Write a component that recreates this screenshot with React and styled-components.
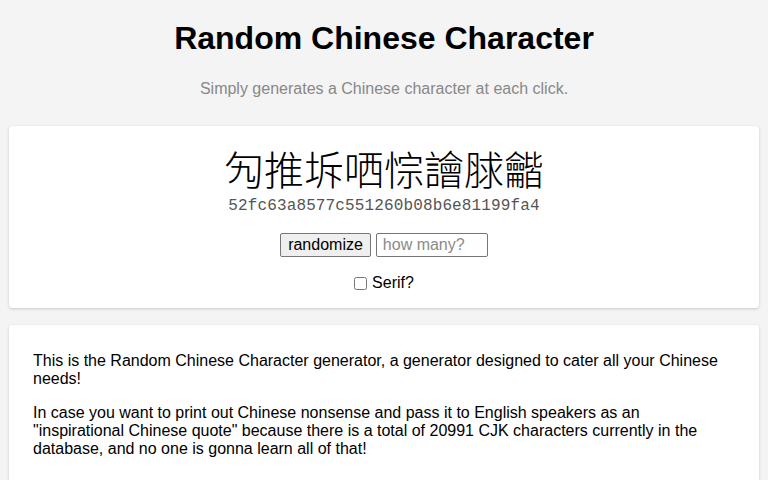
import React, { useState } from "react";
import styled, { createGlobalStyle } from "styled-components";

const GlobalStyle = createGlobalStyle`
  html, body {
    margin: 0;
    padding: 0;
    background-color: #f4f4f4;
    font-family: "Liberation Sans", Arial, sans-serif;
    color: #000;
  }
`;

const Page = styled.div`
  display: flex;
  flex-direction: column;
  padding: 0 9px;
  gap: 17px;
`;

const Header = styled.header`
  display: flex;
  flex-direction: column;
  align-items: center;
  padding-top: 20px;
  padding-bottom: 11px;
  h1 {
    margin: 0;
    font-size: 32px;
    line-height: 37px;
    font-weight: bold;
  }
  p {
    margin: 23px 0 0;
    font-size: 16px;
    line-height: 18px;
    color: #888;
  }
`;

const Card = styled.section`
  background-color: #fff;
  border-radius: 3px;
  box-shadow: 0 1px 3px rgba(0, 0, 0, 0.18);
  padding: ${(p) => p.$pad};
`;

const Generator = styled(Card)`
  display: flex;
  flex-direction: column;
  align-items: center;
`;

const Chars = styled.div`
  font-family: ${(p) =>
    p.$serif
      ? '"Noto Serif CJK SC", "Liberation Serif", serif'
      : '"Noto Sans CJK SC", sans-serif'};
  font-size: 40px;
  line-height: 48px;
  font-weight: 300;
`;

const Hash = styled.div`
  margin-top: 5px;
  font-family: "Liberation Mono", monospace;
  font-size: 16px;
  line-height: 18px;
  letter-spacing: 0.13px;
  color: #555;
`;

const Controls = styled.form`
  display: flex;
  align-items: center;
  gap: 5px;
  margin-top: 18px;
  button {
    font-family: "Liberation Sans", Arial, sans-serif;
    font-size: 16px;
    height: 24px;
    padding: 0 7px;
    background-color: #efefef;
    border: 1px solid #767676;
    border-radius: 2px;
    color: #000;
  }
  input {
    font-family: "Liberation Sans", Arial, sans-serif;
    font-size: 16px;
    height: 24px;
    width: 112px;
    box-sizing: border-box;
    padding: 0 6px;
    border: 1px solid #767676;
    border-radius: 2px;
    &::placeholder {
      color: #8a8a8a;
    }
  }
`;

const SerifToggle = styled.label`
  display: flex;
  align-items: center;
  gap: 5px;
  margin-top: 17px;
  font-size: 16px;
  input {
    margin: 0;
    width: 13px;
    height: 13px;
  }
`;

const About = styled(Card)`
  font-size: 16px;
  line-height: 18px;
  p {
    margin: 0 0 16px;
  }
`;

export default function App() {
  const [serif, setSerif] = useState(false);
  return (
    <Page>
      <GlobalStyle />
      <Header>
        <h1>Random Chinese Character</h1>
        <p>Simply generates a Chinese character at each click.</p>
      </Header>
      <Generator $pad="18px 24px 16px">
        <Chars $serif={serif}>勼推坼哂悰譮脙龤</Chars>
        <Hash>52fc63a8577c551260b08b6e81199fa4</Hash>
        <Controls onSubmit={(e) => e.preventDefault()}>
          <button type="submit">randomize</button>
          <input type="text" placeholder="how many?" />
        </Controls>
        <SerifToggle>
          <input
            type="checkbox"
            checked={serif}
            onChange={(e) => setSerif(e.target.checked)}
          />
          Serif?
        </SerifToggle>
      </Generator>
      <About $pad="27px 24px 8px">
        <p>
          This is the Random Chinese Character generator, a generator designed
          to cater all your Chinese needs!
        </p>
        <p>
          In case you want to print out Chinese nonsense and pass it to English
          speakers as an "inspirational Chinese quote" because there is a total
          of 20991 CJK characters currently in the database, and no one is
          gonna learn all of that!
        </p>
      </About>
    </Page>
  );
}
